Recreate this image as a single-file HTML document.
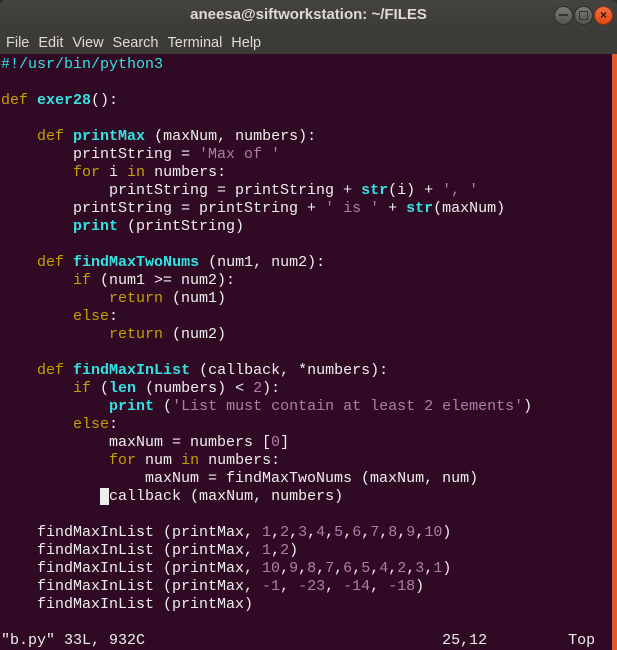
<!DOCTYPE html>
<html><head><meta charset="utf-8"><style>
html,body{margin:0;padding:0;width:617px;height:650px;overflow:hidden;background:#2f2f2c;}
#title{position:absolute;left:0;top:0;width:617px;height:31px;background:linear-gradient(#44433f,#3c3b37);border-radius:6px 6px 0 0;color:#dfdbd2;font:bold 15px "Liberation Sans",sans-serif;text-align:center;line-height:30px;}
#menu{position:absolute;left:0;top:31px;width:617px;height:23px;background:#3c3b37;color:#dfdbd2;font:14.5px "Liberation Sans",sans-serif;line-height:25px;}
#menu span{margin-left:6px;margin-right:3px;}
.btn{position:absolute;top:6px;width:17px;height:17px;border-radius:50%;background:linear-gradient(#7a7974,#55544f);border:1px solid #2e2d2a;}
#term{position:absolute;left:0;top:54px;width:612px;height:596px;background:#300a24;}
#sb{position:absolute;left:612px;top:54px;width:5px;height:596px;background:#e05a2a;}
pre{margin:0;position:absolute;left:1px;top:2px;font:15px/18px "Liberation Mono",monospace;color:#eeeeec;}
.k{color:#c4a000}.f{color:#34e2e2;font-weight:bold}.c{color:#34e2e2}.s{color:#ad7fa8}
.cur{background:#eeeeec;color:#300a24}
</style></head><body>
<div id="title">aneesa@siftworkstation: ~/FILES</div>
<div class="btn" style="left:554px;"><div style="position:absolute;left:4px;top:7px;width:9px;height:2px;background:#333"></div></div>
<div class="btn" style="left:574px;"><div style="position:absolute;left:4px;top:4px;width:7px;height:7px;border:1px solid #333"></div></div>
<div class="btn" style="left:594px;background:linear-gradient(#f0703f,#df4a16);border-color:#8a2e0e;color:#3a1205;font:bold 12px 'Liberation Sans';text-align:center;line-height:17px;">×</div>
<div id="menu"><span>File</span><span>Edit</span><span>View</span><span>Search</span><span>Terminal</span><span>Help</span></div>
<div id="term"><pre><span class="c">#!/usr/bin/python3</span>

<span class="k">def</span> <span class="f">exer28</span>():

    <span class="k">def</span> <span class="f">printMax</span> (maxNum, numbers):
        printString = <span class="s">'Max of '</span>
        <span class="k">for</span> i <span class="k">in</span> numbers:
            printString = printString + <span class="f">str</span>(i) + <span class="s">', '</span>
        printString = printString + <span class="s">' is '</span> + <span class="f">str</span>(maxNum)
        <span class="f">print</span> (printString)

    <span class="k">def</span> <span class="f">findMaxTwoNums</span> (num1, num2):
        <span class="k">if</span> (num1 &gt;= num2):
            <span class="k">return</span> (num1)
        <span class="k">else</span>:
            <span class="k">return</span> (num2)

    <span class="k">def</span> <span class="f">findMaxInList</span> (callback, *numbers):
        <span class="k">if</span> (<span class="f">len</span> (numbers) &lt; <span class="s">2</span>):
            <span class="f">print</span> (<span class="s">'List must contain at least 2 elements'</span>)
        <span class="k">else</span>:
            maxNum = numbers [<span class="s">0</span>]
            <span class="k">for</span> num <span class="k">in</span> numbers:
                maxNum = findMaxTwoNums (maxNum, num)
           <span class="cur"> </span>callback (maxNum, numbers)

    findMaxInList (printMax, <span class="s">1</span>,<span class="s">2</span>,<span class="s">3</span>,<span class="s">4</span>,<span class="s">5</span>,<span class="s">6</span>,<span class="s">7</span>,<span class="s">8</span>,<span class="s">9</span>,<span class="s">10</span>)
    findMaxInList (printMax, <span class="s">1</span>,<span class="s">2</span>)
    findMaxInList (printMax, <span class="s">10</span>,<span class="s">9</span>,<span class="s">8</span>,<span class="s">7</span>,<span class="s">6</span>,<span class="s">5</span>,<span class="s">4</span>,<span class="s">2</span>,<span class="s">3</span>,<span class="s">1</span>)
    findMaxInList (printMax, <span class="s">-1</span>, <span class="s">-23</span>, <span class="s">-14</span>, <span class="s">-18</span>)
    findMaxInList (printMax)

"b.py" 33L, 932C                                 25,12         Top</pre></div>
<div id="sb"></div>
</body></html>
